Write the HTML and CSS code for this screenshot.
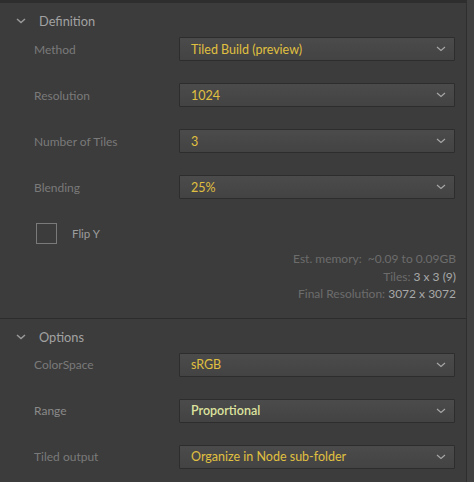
FILE: index.html
```html
<!DOCTYPE html>
<html>
<head>
<meta charset="utf-8">
<link rel="stylesheet" href="styles.css">
</head>
<body>
<div class="app">
  <div class="panel">
    <div class="topline"></div>
    <div class="section-head">
      <svg class="chev-head" width="10" height="6" viewBox="0 0 10 6"><path d="M1 1 L5 4.5 L9 1" fill="none" stroke="#9a9a9a" stroke-width="1.5"/></svg>
      <span>Definition</span>
    </div>
    <div class="rows">
      <div class="row"><span class="label">Method</span><div class="dd"><span class="val">Tiled Build (preview)</span><svg class="chev" width="10" height="6" viewBox="0 0 10 6"><path d="M1 1 L5 4.5 L9 1" fill="none" stroke="#a8a8a8" stroke-width="1.1"/></svg></div></div>
      <div class="row"><span class="label">Resolution</span><div class="dd"><span class="val">1024</span><svg class="chev" width="10" height="6" viewBox="0 0 10 6"><path d="M1 1 L5 4.5 L9 1" fill="none" stroke="#a8a8a8" stroke-width="1.1"/></svg></div></div>
      <div class="row"><span class="label">Number of Tiles</span><div class="dd"><span class="val">3</span><svg class="chev" width="10" height="6" viewBox="0 0 10 6"><path d="M1 1 L5 4.5 L9 1" fill="none" stroke="#a8a8a8" stroke-width="1.1"/></svg></div></div>
      <div class="row"><span class="label">Blending</span><div class="dd"><span class="val">25%</span><svg class="chev" width="10" height="6" viewBox="0 0 10 6"><path d="M1 1 L5 4.5 L9 1" fill="none" stroke="#a8a8a8" stroke-width="1.1"/></svg></div></div>
    </div>
    <div class="check-row">
      <div class="checkbox"></div>
      <span class="check-label">Flip Y</span>
    </div>
    <div class="info">
      <div class="dim">Est. memory:&nbsp; ~0.09 to 0.09GB</div>
      <div><span class="dim">Tiles: </span><span class="bright">3 x 3 (9)</span></div>
      <div><span class="dim">Final Resolution: </span><span class="bright">3072 x 3072</span></div>
    </div>
    <div class="sep"></div>
    <div class="section-head">
      <svg class="chev-head" width="10" height="6" viewBox="0 0 10 6"><path d="M1 1 L5 4.5 L9 1" fill="none" stroke="#9a9a9a" stroke-width="1.5"/></svg>
      <span>Options</span>
    </div>
    <div class="rows">
      <div class="row"><span class="label">ColorSpace</span><div class="dd"><span class="val">sRGB</span><svg class="chev" width="10" height="6" viewBox="0 0 10 6"><path d="M1 1 L5 4.5 L9 1" fill="none" stroke="#a8a8a8" stroke-width="1.1"/></svg></div></div>
      <div class="row"><span class="label label-hi">Range</span><div class="dd"><span class="val val-alt">Proportional</span><svg class="chev" width="10" height="6" viewBox="0 0 10 6"><path d="M1 1 L5 4.5 L9 1" fill="none" stroke="#a8a8a8" stroke-width="1.1"/></svg></div></div>
      <div class="row"><span class="label">Tiled output</span><div class="dd"><span class="val">Organize in Node sub-folder</span><svg class="chev" width="10" height="6" viewBox="0 0 10 6"><path d="M1 1 L5 4.5 L9 1" fill="none" stroke="#a8a8a8" stroke-width="1.1"/></svg></div></div>
    </div>
  </div>
  <div class="strip"></div>
</div>
</body>
</html>
```
FILE: styles.css
```css
html, body {
  margin: 0;
  padding: 0;
  background: #3c3c3c;
  height: 100%;
}
body {
  font-family: Lato, "Open Sans", sans-serif;
  font-size: 12.5px;
  overflow: hidden;
}
.app {
  display: flex;
  height: 482px;
}
.panel {
  width: 466px;
  border-right: 1px solid #2f2f2f;
  background: #3c3c3c;
}
.strip {
  flex: 1;
  background: #414141;
}
.topline {
  height: 3px;
  background: #2e2e2e;
}
.section-head {
  height: 32px;
  padding-top: 2px;
  display: flex;
  align-items: center;
  color: #a2a2a2;
  font-size: 12.8px;
}
.chev-head {
  margin-left: 16px;
  margin-right: 13px;
}
.rows {
  display: flex;
  flex-direction: column;
  gap: 22px;
  padding-right: 11px;
}
.row {
  display: flex;
  align-items: center;
  height: 24px;
}
.label {
  width: 145px;
  padding-left: 34px;
  color: #7a7a7a;
  font-size: 12px;
}
.label-hi {
  color: #8a8a8a;
}
.dd {
  flex: 1;
  height: 22px;
  border: 1px solid #2d2d2d;
  border-radius: 1px;
  background: linear-gradient(#4b4b4b, #434343);
  display: flex;
  align-items: center;
  justify-content: space-between;
  padding: 0 8px 0 11px;
}
.val {
  color: #e0c040;
}
.val-alt {
  color: #dde39e;
  font-weight: 600;
}
.chev {
  display: block;
}
.check-row {
  display: flex;
  align-items: center;
  height: 22px;
  margin-top: 23px;
  padding-left: 36px;
}
.checkbox {
  width: 19px;
  height: 19px;
  border: 1.5px solid #7a7a7a;
}
.check-label {
  margin-left: 15px;
  color: #9c9c9c;
  font-size: 11.5px;
}
.info {
  margin-top: 6px;
  padding-right: 10px;
  text-align: right;
  line-height: 17.5px;
  font-size: 12px;
}
.dim {
  color: #6c6c6c;
}
.bright {
  color: #a8a8a8;
}
.sep {
  margin-top: 15px;
  height: 1px;
  background: #2c2c2c;
}
```
